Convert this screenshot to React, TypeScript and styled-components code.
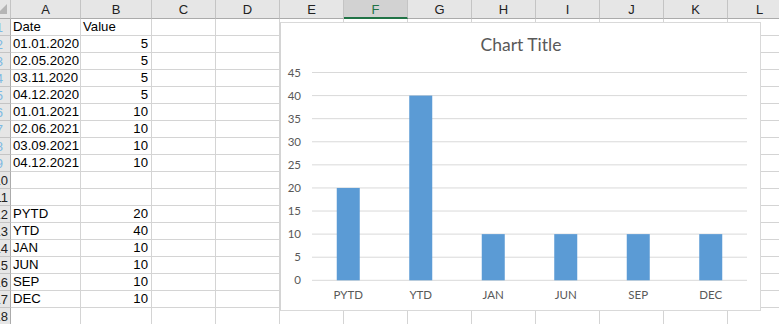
import React from "react";
import styled, { createGlobalStyle } from "styled-components";

const Global = createGlobalStyle`
  html, body { margin: 0; padding: 0; background: #ffffff; overflow: hidden; }
  body { width: 779px; height: 324px; }
`;

const Sheet = styled.div`
  position: relative;
  width: 779px;
  height: 324px;
  overflow: hidden;
  font-family: "Liberation Sans", Arial, sans-serif;
`;

const Grid = styled.div`
  display: grid;
  grid-template-columns: 11px 70px 71px repeat(10, 64px);
  grid-template-rows: 19px repeat(18, 17px);
`;

const Corner = styled.div`
  box-sizing: border-box;
  background: #e6e6e6;
  border-right: 1px solid #c4c4c4;
  border-bottom: 1px solid #ababab;
  display: flex;
  align-items: flex-end;
  justify-content: flex-start;
  padding-bottom: 3px;
`;

const ColHead = styled.div<{ $selected?: boolean }>`
  box-sizing: border-box;
  background: ${(p) => (p.$selected ? "#d2d2d2" : "#e6e6e6")};
  border-right: 1px solid #c4c4c4;
  border-bottom: ${(p) => (p.$selected ? "2px solid #217346" : "1px solid #ababab")};
  display: flex;
  align-items: center;
  justify-content: center;
  font-size: 13px;
  color: ${(p) => (p.$selected ? "#217346" : "#222222")};
  padding-top: ${(p) => (p.$selected ? "1px" : "0")};
`;

const RowHead = styled.div<{ $single?: boolean }>`
  box-sizing: border-box;
  background: #e6e6e6;
  border-right: 1px solid #ababab;
  border-bottom: 1px solid #c4c4c4;
  display: flex;
  align-items: center;
  justify-content: flex-end;
  overflow: hidden;
  white-space: nowrap;
  font-size: 13px;
  color: ${(p) => (p.$single ? "#7db9e3" : "#222222")};
  padding-right: ${(p) => (p.$single ? "7px" : "2px")};
`;

const Cell = styled.div<{ $align?: "left" | "right" }>`
  box-sizing: border-box;
  border-right: 1px solid #d4d4d4;
  border-bottom: 1px solid #d4d4d4;
  display: flex;
  align-items: flex-end;
  justify-content: ${(p) => (p.$align === "right" ? "flex-end" : "flex-start")};
  padding: 0 3px 1px 2px;
  font-size: 13.2px;
  line-height: 15px;
  color: #000000;
  white-space: nowrap;
  overflow: visible;
`;

const ChartBox = styled.div`
  position: absolute;
  left: 279px;
  top: 22px;
  width: 482px;
  height: 289px;
  box-sizing: border-box;
  background: #ffffff;
  border: 1px solid #d9d9d9;
  border-left: 2px solid #d4d4d4;
`;

const ChartSvg = styled.svg`
  display: block;
  font-family: Lato, "Open Sans", sans-serif;
`;

const columns = ["A", "B", "C", "D", "E", "F", "G", "H", "I", "J", "K", "L"];

const rows: [string, string, boolean][] = [
  ["Date", "Value", false],
  ["01.01.2020", "5", true],
  ["02.05.2020", "5", true],
  ["03.11.2020", "5", true],
  ["04.12.2020", "5", true],
  ["01.01.2021", "10", true],
  ["02.06.2021", "10", true],
  ["03.09.2021", "10", true],
  ["04.12.2021", "10", true],
  ["", "", true],
  ["", "", true],
  ["PYTD", "20", true],
  ["YTD", "40", true],
  ["JAN", "10", true],
  ["JUN", "10", true],
  ["SEP", "10", true],
  ["DEC", "10", true],
  ["", "", true],
];

const chartData = [
  { label: "PYTD", value: 20 },
  { label: "YTD", value: 40 },
  { label: "JAN", value: 10 },
  { label: "JUN", value: 10 },
  { label: "SEP", value: 10 },
  { label: "DEC", value: 10 },
];

const Chart: React.FC = () => {
  const x0 = 31;
  const x1 = 466;
  const yTop = 49.5;
  const yZero = 257.3;
  const step = (yZero - yTop) / 9;
  const catW = (x1 - x0) / chartData.length;
  const barW = 23;
  const ticks = [45, 40, 35, 30, 25, 20, 15, 10, 5, 0];
  return (
    <ChartSvg width={479} height={287} viewBox="0 0 479 287">
      <text x={240} y={28} textAnchor="middle" fontSize={17.5} fill="#595959">
        Chart Title
      </text>
      {ticks.map((t, i) => {
        const y = yTop + i * step;
        return (
          <g key={t}>
            <line x1={x0} x2={x1} y1={y} y2={y} stroke="#d9d9d9" strokeWidth={1} />
            <text x={20} y={y + 4} textAnchor="end" fontSize={11.5} fill="#595959">
              {t}
            </text>
          </g>
        );
      })}
      {chartData.map((d, i) => {
        const cx = x0 + catW * i + catW / 2;
        const h = (d.value / 45) * (yZero - yTop);
        return (
          <g key={d.label}>
            <rect x={cx - barW / 2} y={yZero - h} width={barW} height={h} fill="#5b9bd5" />
            <text x={cx} y={276} textAnchor="middle" fontSize={11.5} fill="#595959">
              {d.label}
            </text>
          </g>
        );
      })}
    </ChartSvg>
  );
};

export default function App() {
  return (
    <Sheet>
      <Global />
      <Grid>
        <Corner>
          <svg width="8" height="11" viewBox="0 0 8 11">
            <polygon points="7,0 7,10 -3,10" fill="#b5b5b5" />
          </svg>
        </Corner>
        {columns.map((c) => (
          <ColHead key={c} $selected={c === "F"}>
            {c}
          </ColHead>
        ))}
        {rows.map((r, i) => (
          <React.Fragment key={i}>
            <RowHead $single={i + 1 < 10}>{i + 1}</RowHead>
            <Cell>{r[0]}</Cell>
            <Cell $align={r[2] ? "right" : "left"}>{r[1]}</Cell>
            {columns.slice(2).map((c) => (
              <Cell key={c} />
            ))}
          </React.Fragment>
        ))}
      </Grid>
      <ChartBox>
        <Chart />
      </ChartBox>
    </Sheet>
  );
}
